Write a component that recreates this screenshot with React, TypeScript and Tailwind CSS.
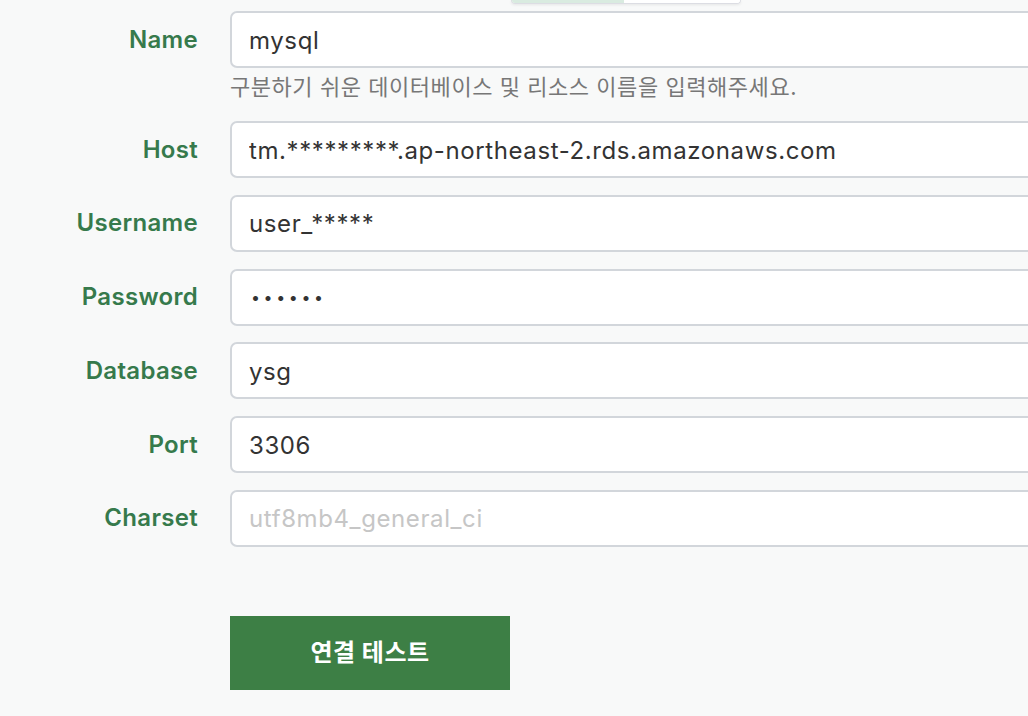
import React from "react"

const fields = [
  { label: "Host", value: "tm.*********.ap-northeast-2.rds.amazonaws.com" },
  { label: "Username", value: "user_*****" },
  { label: "Password", value: "••••••", password: true },
  { label: "Database", value: "ysg" },
  { label: "Port", value: "3306" },
  { label: "Charset", value: "", placeholder: "utf8mb4_general_ci" },
]

function Label({ children }: { children: React.ReactNode }) {
  return (
    <div className="w-[198px] shrink-0 text-right text-[24px] font-semibold tracking-[0.3px] text-[#367a4c] leading-none">
      {children}
    </div>
  )
}

function Field({ value, placeholder, password }: { value: string; placeholder?: string; password?: boolean }) {
  return (
    <input
      readOnly
      type="text"
      value={value}
      placeholder={placeholder}
      className={
        password
          ? "h-[57px] w-[900px] shrink-0 rounded-[7px] border-2 border-[#d2d6db] bg-white pl-[19px] pr-[17px] text-[16px] tracking-[3.6px] text-[#333] outline-none"
          : "h-[57px] w-[900px] shrink-0 rounded-[7px] border-2 border-[#d2d6db] bg-white px-[17px] pt-[1px] text-[24px] tracking-[0.6px] text-[#333] outline-none placeholder:text-[#c6c6c6]"
      }
    />
  )
}

export default function App() {
  return (
    <div className="h-screen w-full overflow-hidden bg-[#f8f9f9] font-['Inter','Noto_Sans_CJK_KR',sans-serif]">
      {/* tabs cut off at the top */}
      <div className="ml-[511px] flex h-[4px] w-[230px] overflow-hidden rounded-b-[8px] border-x border-b border-[#dcdde3] shadow-[0_1px_3px_rgba(0,0,0,0.08)]">
        <div className="w-[112px] bg-[#d9ebe0]" />
        <div className="flex-1 bg-white" />
      </div>

      <div className="mt-[7px] flex flex-col">
        <div className="flex items-start gap-8">
          <div className="flex h-[57px] items-center">
            <Label>Name</Label>
          </div>
          <div className="flex flex-col">
            <Field value="mysql" />
            <p className="mt-[5px] text-[22px] leading-[28px] text-[#777] tracking-[0.55px]">
              구분하기 쉬운 데이터베이스 및 리소스 이름을 입력해주세요.
            </p>
          </div>
        </div>

        <div className="mt-[20px] flex flex-col gap-[16.8px]">
          {fields.map((f) => (
            <div key={f.label} className="flex items-center gap-8">
              <Label>{f.label}</Label>
              <Field value={f.value} placeholder={f.placeholder} password={f.password} />
            </div>
          ))}
        </div>

        <div className="ml-[230px] mt-[69px]">
          <button className="h-[74px] w-[280px] bg-[#3d7f45] text-[24px] font-bold tracking-[0.5px] text-white">
            연결 테스트
          </button>
        </div>
      </div>
    </div>
  )
}
